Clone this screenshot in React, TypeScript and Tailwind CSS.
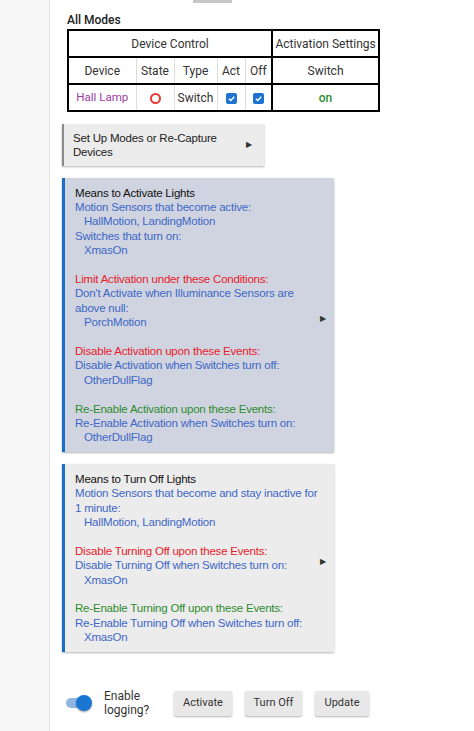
import React from "react";

function Arrow() {
  return <span className="text-[8px] leading-none text-[#333]">▶</span>;
}

function Check() {
  return (
    <span className="inline-flex h-[11px] w-[11px] items-center justify-center rounded-[2px] bg-[#1e73d2] align-middle">
      <svg width="9" height="9" viewBox="0 0 10 10">
        <path d="M2 5.2 L4.2 7.2 L8 3" stroke="white" strokeWidth="1.6" fill="none" />
      </svg>
    </span>
  );
}

const arial = "font-['Liberation_Sans',Arial,sans-serif] text-[11.5px] tracking-[-0.2px]";

function Card({ bg, children }: { bg: string; children: React.ReactNode }) {
  return (
    <div
      className={`flex w-[272px] border-l-[3px] border-[#1c6fc4] ${bg} py-[7.5px] pl-[10px] pr-[8px] shadow-[0_1px_2px_rgba(0,0,0,0.3)]`}
    >
      <div className={`flex-1 ${arial} leading-[14.4px] text-[#3e67c6]`}>{children}</div>
      <div className="flex w-[8px] items-center justify-end pt-[8px]">
        <Arrow />
      </div>
    </div>
  );
}

const Ind = ({ children }: { children: React.ReactNode }) => <div className="pl-[9px]">{children}</div>;
const Gap = () => <div className="h-[14.4px]" />;

const td = "h-[27px] text-center align-middle";

export default function App() {
  return (
    <div className="flex min-h-[731px] bg-white font-['Roboto','Liberation_Sans',sans-serif] text-[#222]">
      <aside className="w-[50px] shrink-0 border-r border-[#e6e6e6] bg-[#f7f7f7]" />
      <main className="relative flex-1 pl-[12px]">
        <div className="absolute left-[143px] top-0 h-[3px] w-[39px] bg-[#c6c6c6]" />
        <div className="pl-[5px] pt-[12px] text-[12px] font-medium leading-[16px]">All Modes</div>

        <table className="ml-[5px] mt-[1px] w-[311px] table-fixed border-collapse border-2 border-black text-[12px] text-[#333]">
          <colgroup>
            <col className="w-[68px]" />
            <col className="w-[38px]" />
            <col className="w-[43px]" />
            <col className="w-[28px]" />
            <col className="w-[27px]" />
            <col className="w-[107px]" />
          </colgroup>
          <tbody>
            <tr className="border-b-2 border-black">
              <td colSpan={5} className={`${td} border-r-2 border-black`}>
                Device Control
              </td>
              <td className={`${td} whitespace-nowrap`}>Activation Settings</td>
            </tr>
            <tr className="border-b-2 border-black">
              <td className={`${td} border-r border-[#ddd]`}>Device</td>
              <td className={`${td} border-r border-[#ddd]`}>State</td>
              <td className={`${td} border-r border-[#ddd]`}>Type</td>
              <td className={`${td} border-r border-[#ddd]`}>Act</td>
              <td className={`${td} border-r-2 border-black`}>Off</td>
              <td className={td}>Switch</td>
            </tr>
            <tr>
              <td className={`${td} border-r border-[#ddd] text-[11.5px] text-[#9c3aa3]`}>Hall Lamp</td>
              <td className={`${td} border-r border-[#ddd]`}>
                <span className="inline-block h-[11px] w-[11px] rounded-full border-2 border-[#e53935] align-middle" />
              </td>
              <td className={`${td} border-r border-[#ddd]`}>Switch</td>
              <td className={`${td} border-r border-[#ddd]`}>
                <Check />
              </td>
              <td className={`${td} border-r-2 border-black`}>
                <Check />
              </td>
              <td className={`${td} font-medium text-[#2e8b2e]`}>on</td>
            </tr>
          </tbody>
        </table>

        <div
          className={`mt-[12px] flex h-[42px] w-[202px] items-center border-l-2 border-[#8a8a8a] bg-[#ececec] pl-[9px] pr-[12px] ${arial} leading-[14px] text-[#222] shadow-[0_1px_2px_rgba(0,0,0,0.3)]`}
        >
          <div className="flex-1 pr-[20px]">Set Up Modes or Re-Capture Devices</div>
          <Arrow />
        </div>

        <div className="mt-[12px] flex flex-col gap-[12px]">
          <Card bg="bg-[#cfd4e0]">
            <div className="text-[#111]">Means to Activate Lights</div>
            <div>Motion Sensors that become active:</div>
            <Ind>HallMotion, LandingMotion</Ind>
            <div>Switches that turn on:</div>
            <Ind>XmasOn</Ind>
            <Gap />
            <div className="text-[#e8202a]">Limit Activation under these Conditions:</div>
            <div>Don't Activate when Illuminance Sensors are above null:</div>
            <Ind>PorchMotion</Ind>
            <Gap />
            <div className="text-[#e8202a]">Disable Activation upon these Events:</div>
            <div>Disable Activation when Switches turn off:</div>
            <Ind>OtherDullFlag</Ind>
            <Gap />
            <div className="text-[#2e8b2e]">Re-Enable Activation upon these Events:</div>
            <div>Re-Enable Activation when Switches turn on:</div>
            <Ind>OtherDullFlag</Ind>
          </Card>

          <Card bg="bg-[#ececec]">
            <div className="text-[#111]">Means to Turn Off Lights</div>
            <div>Motion Sensors that become and stay inactive for 1 minute:</div>
            <Ind>HallMotion, LandingMotion</Ind>
            <Gap />
            <div className="text-[#e8202a]">Disable Turning Off upon these Events:</div>
            <div>Disable Turning Off when Switches turn on:</div>
            <Ind>XmasOn</Ind>
            <Gap />
            <div className="text-[#2e8b2e]">Re-Enable Turning Off upon these Events:</div>
            <div>Re-Enable Turning Off when Switches turn off:</div>
            <Ind>XmasOn</Ind>
          </Card>
        </div>

        <div className="mt-[37px] flex items-center pb-[16px]">
          <div className="relative ml-[4px] h-[10px] w-[24px] rounded-full bg-[#8fb6e0]">
            <span className="absolute -top-[3px] right-[-2px] h-[16px] w-[16px] rounded-full bg-[#1976d2] shadow-[0_1px_2px_rgba(0,0,0,0.35)]" />
          </div>
          <div className="ml-[14px] w-[50px] text-[12px] leading-[14px] text-[#333]">Enable logging?</div>
          <div className="ml-[20px] flex gap-[13px] text-[11px] text-[#333]">
            <button className="h-[25px] w-[58px] rounded-[2px] bg-[#e8e8e8] shadow-[0_1px_2px_rgba(0,0,0,0.3)]">Activate</button>
            <button className="h-[25px] w-[57px] rounded-[2px] bg-[#e8e8e8] shadow-[0_1px_2px_rgba(0,0,0,0.3)]">Turn Off</button>
            <button className="h-[25px] w-[54px] rounded-[2px] bg-[#e8e8e8] shadow-[0_1px_2px_rgba(0,0,0,0.3)]">Update</button>
          </div>
        </div>
      </main>
    </div>
  );
}
